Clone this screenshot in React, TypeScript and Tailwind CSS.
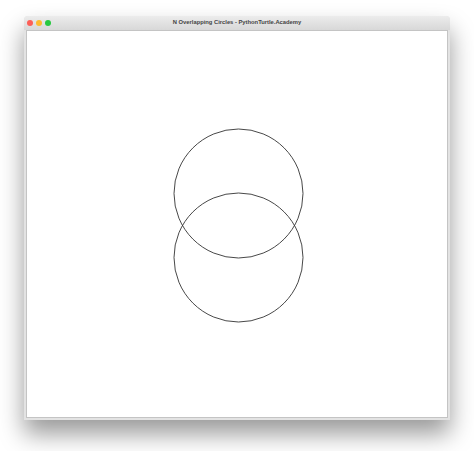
import React from 'react';

const App: React.FC = () => {
  return (
    <div className="w-[474px] h-[451px] bg-white pt-[16px] pl-[24px]" style={{ fontFamily: '"Liberation Sans", Arial, sans-serif' }}>
      <div className="w-[426px] h-[404px] flex flex-col bg-[#e3e3e3] rounded-t-[4px] shadow-[0_14px_24px_rgba(0,0,0,0.4)]">
        {/* Title bar */}
        <div className="h-[14px] flex items-center px-[3px] bg-gradient-to-b from-[#ececec] to-[#d8d8d8] rounded-t-[4px]">
          <div className="flex items-center gap-[3px] w-[60px]">
            <span className="w-[6px] h-[6px] rounded-full bg-[#fd5f57]" />
            <span className="w-[6px] h-[6px] rounded-full bg-[#febc2e]" />
            <span className="w-[6px] h-[6px] rounded-full bg-[#28c840]" />
          </div>
          <div className="flex-1 text-center text-[5.8px] font-bold text-[#444] leading-none pr-[60px]">
            N Overlapping Circles - PythonTurtle.Academy
          </div>
        </div>
        {/* Canvas */}
        <div className="flex-1 mx-[2px] mb-[2px] mt-0 border border-[#c4c4c4] bg-white">
          <svg width="100%" height="100%">
            <circle cx="211.5" cy="162.5" r="64.5" fill="none" stroke="#333" strokeWidth="0.9" />
            <circle cx="211.5" cy="226.5" r="64.5" fill="none" stroke="#333" strokeWidth="0.9" />
          </svg>
        </div>
      </div>
    </div>
  );
};

export default App;
